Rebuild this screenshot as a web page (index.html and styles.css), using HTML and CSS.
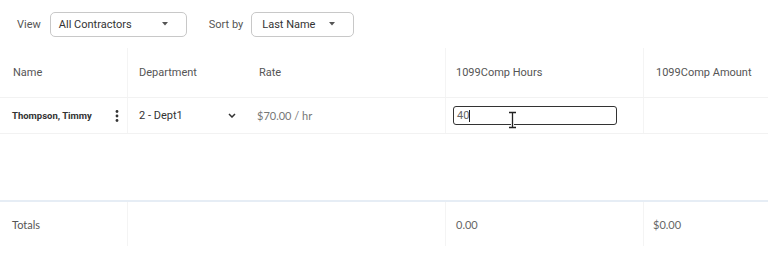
FILE: index.html
```html
<!DOCTYPE html>
<html>
<head>
<meta charset="utf-8">
<link rel="stylesheet" href="styles.css">
</head>
<body>
<div class="toolbar">
  <span class="lbl">View</span>
  <div class="select sel-view"><span>All Contractors</span><svg class="tri" width="6" height="4" viewBox="0 0 6 4"><path d="M0 0H6L3 3.5Z" fill="#555"/></svg></div>
  <span class="lbl lbl-sort">Sort by</span>
  <div class="select sel-sort"><span>Last Name</span><svg class="tri" width="6" height="4" viewBox="0 0 6 4"><path d="M0 0H6L3 3.5Z" fill="#555"/></svg></div>
</div>

<div class="grid head">
  <div class="c c-name">Name</div>
  <div class="c c-dept">Department</div>
  <div class="c c-rate">Rate</div>
  <div class="c c-hours">1099Comp Hours</div>
  <div class="c c-amt">1099Comp Amount</div>
</div>

<div class="grid row">
  <div class="c c-name"><span class="emp">Thompson, Timmy</span>
    <svg class="kebab" width="4" height="12" viewBox="0 0 4 12"><circle cx="2" cy="1.5" r="1.4" fill="#333"/><circle cx="2" cy="6" r="1.4" fill="#333"/><circle cx="2" cy="10.5" r="1.4" fill="#333"/></svg>
  </div>
  <div class="c c-dept"><span>2 - Dept1</span>
    <svg class="chev" width="8" height="5" viewBox="0 0 8 5"><path d="M1 1L4 4L7 1" fill="none" stroke="#333" stroke-width="1.5"/></svg>
  </div>
  <div class="c c-rate rate">$70.00 / hr</div>
  <div class="c c-hours"><div class="input"><span>40</span><i class="caret"></i></div>
    <svg class="ibeam" width="9" height="18" viewBox="0 0 9 18"><path d="M1 1.5H8M4.5 1.5V16.5M1 16.5H8" fill="none" stroke="#fff" stroke-width="3"/><path d="M1 1.5H8M4.5 1.5V16.5M1 16.5H8" fill="none" stroke="#222" stroke-width="1.3"/></svg>
  </div>
  <div class="c c-amt"></div>
</div>

<div class="spacer"></div>

<div class="grid totals">
  <div class="c c-name">Totals</div>
  <div class="c c-dept"></div>
  <div class="c c-rate"></div>
  <div class="c c-hours">0.00</div>
  <div class="c c-amt">$0.00</div>
</div>
</body>
</html>
```

FILE: styles.css
```css
html, body {
  margin: 0;
  padding: 0;
  background: #fff;
}
body {
  width: 768px;
  height: 255px;
  overflow: hidden;
  font-family: Roboto, "Liberation Sans", sans-serif;
  font-size: 11px;
  color: #444;
}
.toolbar {
  height: 48px;
  display: flex;
  align-items: center;
  padding-left: 17px;
  box-sizing: border-box;
}
.lbl {
  color: #555;
  margin-right: 9px;
}
.lbl-sort {
  margin-left: 22px;
  margin-right: 8px;
}
.select {
  height: 25px;
  box-sizing: border-box;
  border: 1px solid #c8c8c8;
  border-radius: 5px;
  display: flex;
  align-items: center;
  padding-left: 8px;
  color: #333;
}
.sel-view { width: 137px; }
.sel-sort { width: 103px; padding-left: 10px; }
.select span { flex: 1; }
.tri { margin-right: 18px; }
.grid {
  display: grid;
  grid-template-columns: 128px 117px 201px 198px 124px;
}
.c {
  display: flex;
  align-items: center;
  box-sizing: border-box;
}
.c-name { padding-left: 12px; border-right: 1px solid #f4f4f4; }
.c-dept { padding-left: 11px; }
.c-rate { padding-left: 14px; border-right: 1px solid #f4f4f4; }
.c-hours { padding-left: 9px; border-right: 1px solid #f4f4f4; }
.c-amt { padding-left: 12px; }
.head {
  height: 49px;
  color: #555;
}
.head .c-name { padding-left: 13px; }
.head .c-hours { padding-left: 10px; }
.row {
  height: 35px;
  border-top: 1px solid #f2f2f2;
  border-bottom: 1px solid #f2f2f2;
}
.emp {
  font-weight: bold;
  font-size: 9.5px;
  color: #333;
  flex: 1;
}
.kebab { margin-right: 8px; }
.c-dept span { flex: 1; color: #333; }
.chev { margin-right: 9px; }
.rate {
  font-family: Lato, Roboto, sans-serif;
  color: #777;
  padding-left: 12px;
}
.c-hours { position: relative; }
.input {
  width: 164px;
  height: 19px;
  box-sizing: border-box;
  border: 1.5px solid #333;
  border-radius: 3px;
  display: flex;
  align-items: center;
  padding-left: 3px;
  margin-left: -2px;
  color: #666;
}
.caret {
  display: inline-block;
  width: 1px;
  height: 12px;
  background: #222;
}
.ibeam {
  position: absolute;
  left: 62px;
  top: 13px;
}
.spacer {
  height: 66px;
}
.totals {
  height: 44px;
  border-top: 2px solid #e6edf5;
  color: #666;
  font-family: Lato, Roboto, sans-serif;
}
.totals .c-name { color: #555; }
.totals .c-hours { padding-left: 10px; }
.totals .c-amt { padding-left: 9px; }
```
